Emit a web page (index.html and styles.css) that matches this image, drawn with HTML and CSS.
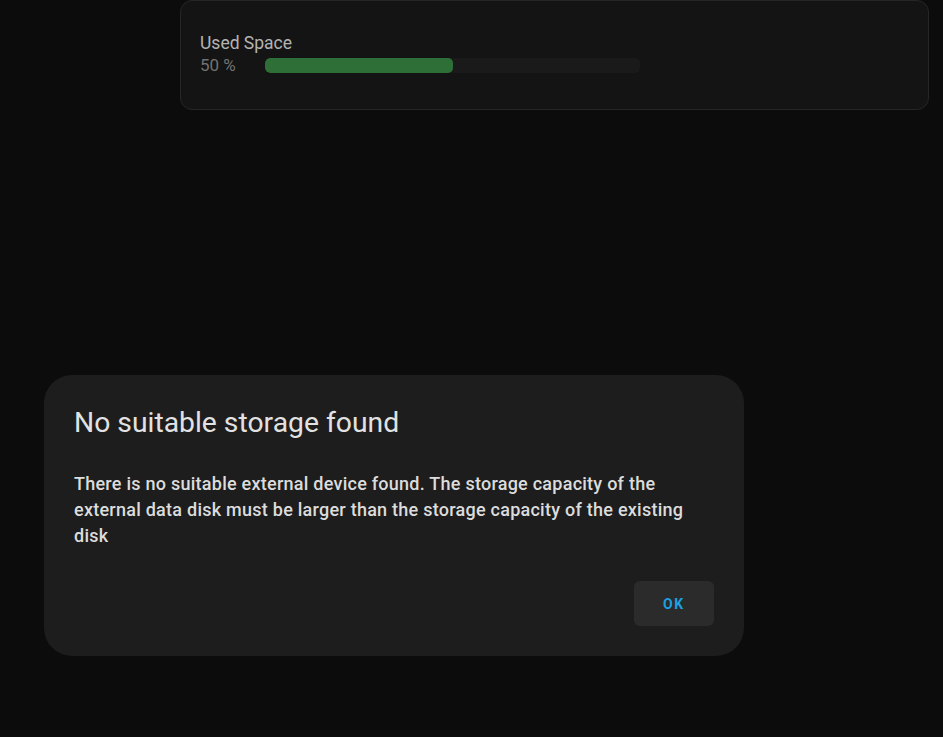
FILE: index.html
```html
<!DOCTYPE html>
<html>
<head>
<meta charset="utf-8">
<link rel="stylesheet" href="styles.css">
</head>
<body>
<div class="page">
  <div class="card">
    <div class="label">Used Space</div>
    <div class="usage">
      <span class="pct">50 %</span>
      <div class="track"><div class="fill" style="width:50%"></div></div>
    </div>
  </div>
</div>
<div class="dialog">
  <h2 class="title">No suitable storage found</h2>
  <p class="body">There is no suitable external device found. The storage capacity of the external data disk must be larger than the storage capacity of the existing disk</p>
  <div class="actions"><button class="ok">OK</button></div>
</div>
</body>
</html>
```
FILE: styles.css
```css
html, body {
  margin: 0;
  padding: 0;
  background: #0c0c0c;
  width: 943px;
  height: 737px;
  overflow: hidden;
  font-family: Roboto, "Liberation Sans", sans-serif;
}
.page {
  padding: 0 14px 0 180px;
}
.card {
  margin-top: 0;
  height: 110px;
  box-sizing: border-box;
  border: 1px solid #262626;
  border-radius: 12px;
  background: #141414;
  padding: 32px 20px 0 19px;
}
.label {
  color: #b4b4b4;
  font-size: 17.5px;
  line-height: 20px;
}
.usage {
  display: flex;
  align-items: center;
  margin-top: 0;
}
.pct {
  color: #727272;
  font-size: 17px;
  line-height: 24px;
  width: 65px;
}
.track {
  width: 375px;
  height: 15px;
  background: #1a1a1a;
  border-radius: 5px;
  overflow: hidden;
}
.fill {
  height: 100%;
  background: #2e6f37;
  border-radius: 5px;
}
.dialog {
  position: absolute;
  left: 44px;
  top: 375px;
  width: 700px;
  height: 281px;
  box-sizing: border-box;
  background: #1d1d1d;
  border-radius: 28px;
  padding: 29px 30px 30px 30px;
  display: flex;
  flex-direction: column;
}
.title {
  margin: 0;
  font-weight: 400;
  font-size: 28.3px;
  line-height: 37px;
  color: #e2e2e2;
}
.body {
  margin: 30px 0 0 0;
  font-size: 18px;
  line-height: 26px;
  color: #dcdcdc;
  font-weight: 500;
  letter-spacing: 0.25px;
}
.actions {
  margin-top: auto;
  display: flex;
  justify-content: flex-end;
}
.ok {
  width: 80px;
  height: 45px;
  border: none;
  border-radius: 6px;
  background: #2b2b2b;
  color: #1ba1e2;
  font-family: Roboto, sans-serif;
  font-weight: 700;
  font-size: 14px;
  letter-spacing: 1.6px;
}
```
